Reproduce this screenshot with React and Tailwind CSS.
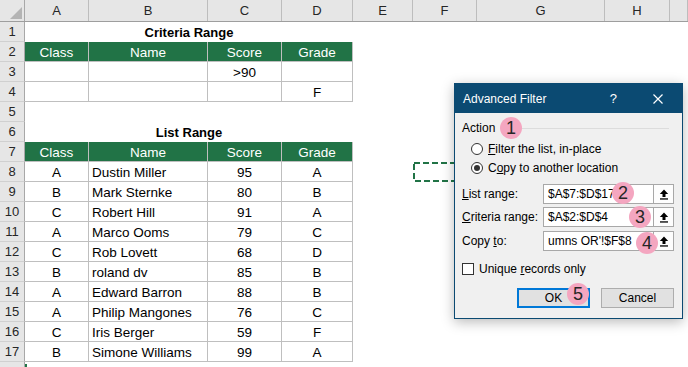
const students = [
  ["A", "Dustin Miller", "95", "A"],
  ["B", "Mark Sternke", "80", "B"],
  ["C", "Robert Hill", "91", "A"],
  ["A", "Marco Ooms", "79", "C"],
  ["C", "Rob Lovett", "68", "D"],
  ["B", "roland dv", "85", "B"],
  ["A", "Edward Barron", "88", "B"],
  ["A", "Philip Mangones", "76", "C"],
  ["C", "Iris Berger", "59", "F"],
  ["B", "Simone Williams", "99", "A"],
];

const tableCols = ["w-[64px]", "w-[119px]", "w-[74px]", "w-[71px]"];
const headers = ["Class", "Name", "Score", "Grade"];
const columnLetters = [
  { letter: "A", w: "w-[64px]" },
  { letter: "B", w: "w-[119px]" },
  { letter: "C", w: "w-[74px]" },
  { letter: "D", w: "w-[71px]" },
  { letter: "E", w: "w-[60px]" },
  { letter: "F", w: "w-[64px]" },
  { letter: "G", w: "w-[128px]" },
  { letter: "H", w: "w-[65px]" },
  { letter: "", w: "w-[18px]" },
];

function RowHead({ n }) {
  return (
    <div className="flex h-[20px] w-[25px] shrink-0 items-center justify-center border-b border-r border-b-[#d0d0d0] border-r-[#a8a8a8] bg-[#e6e6e6] pt-[1px] text-[13px] text-[#262626]">
      {n}
    </div>
  );
}

function Row({ n, children, marquee }) {
  return (
    <div className="flex h-[20px]">
      <RowHead n={n} />
      {children}
      {marquee ? (
        <>
          <div className="w-[60px] shrink-0" />
          <div className="relative w-[64px] shrink-0">
            <svg className="absolute inset-0" width="64" height="20">
              <rect x="1" y="1" width="62" height="18" fill="none" stroke="#217346" strokeWidth="2" strokeDasharray="6 3" />
            </svg>
          </div>
        </>
      ) : null}
    </div>
  );
}

function TitleRow({ n, text }) {
  return (
    <Row n={n}>
      <div className="h-[20px] w-[328px] shrink-0 pt-[2px] text-center text-[13px] font-bold leading-[18px]">
        {text}
      </div>
    </Row>
  );
}

function HeaderRow({ n }) {
  return (
    <Row n={n}>
      {headers.map((h, i) => (
        <div
          key={h}
          className={`${tableCols[i]} h-[20px] shrink-0 border-b border-r border-[#bfbfbf] bg-[#217346] pt-[2px] text-center leading-[18px] text-white`}
        >
          {h}
        </div>
      ))}
    </Row>
  );
}

function DataRow({ n, values, marquee }) {
  return (
    <Row n={n} marquee={marquee}>
      {values.map((v, i) => (
        <div
          key={i}
          className={`${tableCols[i]} h-[20px] shrink-0 overflow-hidden whitespace-nowrap border-b border-r border-[#bfbfbf] pt-[2px] leading-[18px] ${i === 1 ? "pl-[3px]" : "text-center"}`}
        >
          {v}
        </div>
      ))}
    </Row>
  );
}

function Badge({ n, className }) {
  return (
    <div
      className={`absolute flex h-[22px] w-[22px] items-center justify-center rounded-full bg-[#f4a6c0] text-[18px] leading-none text-[#262626] ${className}`}
    >
      {n}
    </div>
  );
}

function PickButton() {
  return (
    <div className="flex w-[20px] shrink-0 items-center justify-center border-l border-[#a8a8a8] bg-[#fdfdfd]">
      <svg width="10" height="11" viewBox="0 0 10 11">
        <path d="M5 0.5 L0.8 5 H3.5 V8 H6.5 V5 H9.2 Z" fill="#000" />
        <rect x="1" y="9.3" width="8" height="1.3" fill="#000" />
      </svg>
    </div>
  );
}

function RangeField({ label, value }) {
  return (
    <div className="flex h-[20px] items-center">
      <span className="w-[81px] shrink-0">{label}</span>
      <div className="flex h-[20px] w-[131px] border border-[#a8a8a8] bg-white">
        <span className="flex-1 overflow-hidden whitespace-nowrap pl-[4px] leading-[18px]">{value}</span>
        <PickButton />
      </div>
    </div>
  );
}

function Radio({ checked, children }) {
  return (
    <div className="flex h-[18px] items-center pl-[9px]">
      <span className="flex h-[12px] w-[12px] items-center justify-center rounded-full border border-[#333] bg-white">
        {checked ? <span className="h-[6px] w-[6px] rounded-full bg-[#333]" /> : null}
      </span>
      <span className="ml-[5px]">{children}</span>
    </div>
  );
}

function AdvancedFilterDialog() {
  return (
    <div className="absolute left-[454px] top-[83px] h-[236px] w-[229px] border border-[#0b4a72] bg-[#f0f0f0] font-['Liberation_Sans',sans-serif] text-[12px] text-black shadow-[0_3px_12px_rgba(0,0,0,0.28)]">
      <div className="flex h-[29px] items-center bg-[#0b4a72] pl-[8px] text-white">
        <span>Advanced Filter</span>
        <span className="ml-auto mr-[36px] text-[13px]">?</span>
        <svg className="mr-[19px]" width="10" height="10" viewBox="0 0 10 10">
          <path d="M0.5 0.5 L9.5 9.5 M9.5 0.5 L0.5 9.5" stroke="#fff" strokeWidth="1.2" />
        </svg>
      </div>

      <div className="flex flex-col px-[7px]">
        <div className="mt-[5px] flex h-[20px] items-center">
          <span>Action</span>
          <div className="ml-[27px] mr-[6px] h-px flex-1 bg-[#dcdcdc]" />
        </div>
        <div className="mt-[2px]">
          <Radio>
            <span className="underline">F</span>ilter the list, in-place
          </Radio>
        </div>
        <div className="mt-[1px]">
          <Radio checked>
            C<span className="underline">o</span>py to another location
          </Radio>
        </div>
        <div className="mt-[7px]">
          <RangeField label={<><span className="underline">L</span>ist range:</>} value="$A$7:$D$17" />
        </div>
        <div className="mt-[3px]">
          <RangeField label={<><span className="underline">C</span>riteria range:</>} value="$A$2:$D$4" />
        </div>
        <div className="mt-[4px]">
          <RangeField label={<>Copy <span className="underline">t</span>o:</>} value="umns OR'!$F$8" />
        </div>
        <div className="mt-[9px] flex h-[18px] items-center">
          <span className="h-[12px] w-[12px] border border-[#333] bg-white" />
          <span className="ml-[5px]">
            Unique <span className="underline">r</span>ecords only
          </span>
        </div>
        <div className="mt-[10px] flex justify-end gap-[11px] pr-[1px]">
          <div className="flex h-[20px] w-[73px] items-center justify-center border-2 border-[#0078d7] bg-[#e1e1e1]">OK</div>
          <div className="flex h-[20px] w-[73px] items-center justify-center border border-[#adadad] bg-[#e1e1e1]">Cancel</div>
        </div>
      </div>

      <Badge n="1" className="left-[45px] top-[33px]" />
      <Badge n="2" className="left-[157px] top-[98px]" />
      <Badge n="3" className="left-[174px] top-[122px]" />
      <Badge n="4" className="left-[181px] top-[148px]" />
      <Badge n="5" className="left-[112px] top-[199px]" />
    </div>
  );
}

export default function App() {
  return (
    <div className="relative h-[367px] w-[688px] overflow-hidden bg-white font-['Liberation_Sans',sans-serif] text-[13.5px] text-black">
      <div className="flex h-[22px] border-b border-[#9e9e9e] bg-[#e6e6e6] text-[13px] text-[#262626]">
        <div className="relative w-[25px] shrink-0 border-r border-[#a8a8a8]">
          <svg className="absolute left-[10px] top-[7px]" width="12" height="12" viewBox="0 0 12 12">
            <path d="M12 0 V12 H0 Z" fill="#b4b4b4" />
          </svg>
        </div>
        {columnLetters.map((c) => (
          <div key={c.letter || "end"} className={`${c.w} flex shrink-0 items-center justify-center border-r border-[#bdbdbd] pt-[1px]`}>
            {c.letter}
          </div>
        ))}
      </div>

      <TitleRow n="1" text="Criteria Range" />
      <HeaderRow n="2" />
      <DataRow n="3" values={["", "", ">90", ""]} />
      <DataRow n="4" values={["", "", "", "F"]} />
      <Row n="5" />
      <TitleRow n="6" text="List Range" />
      <HeaderRow n="7" />
      {students.map((s, i) => (
        <DataRow key={i} n={String(i + 8)} values={s} marquee={i === 0} />
      ))}
      <div className="flex h-[5px]">
        <div className="w-[25px] shrink-0 border-r border-[#a8a8a8] bg-[#e6e6e6]" />
        <div className="mt-[2px] h-[3px] w-[2px] bg-[#217346]" />
      </div>

      <AdvancedFilterDialog />
    </div>
  );
}
